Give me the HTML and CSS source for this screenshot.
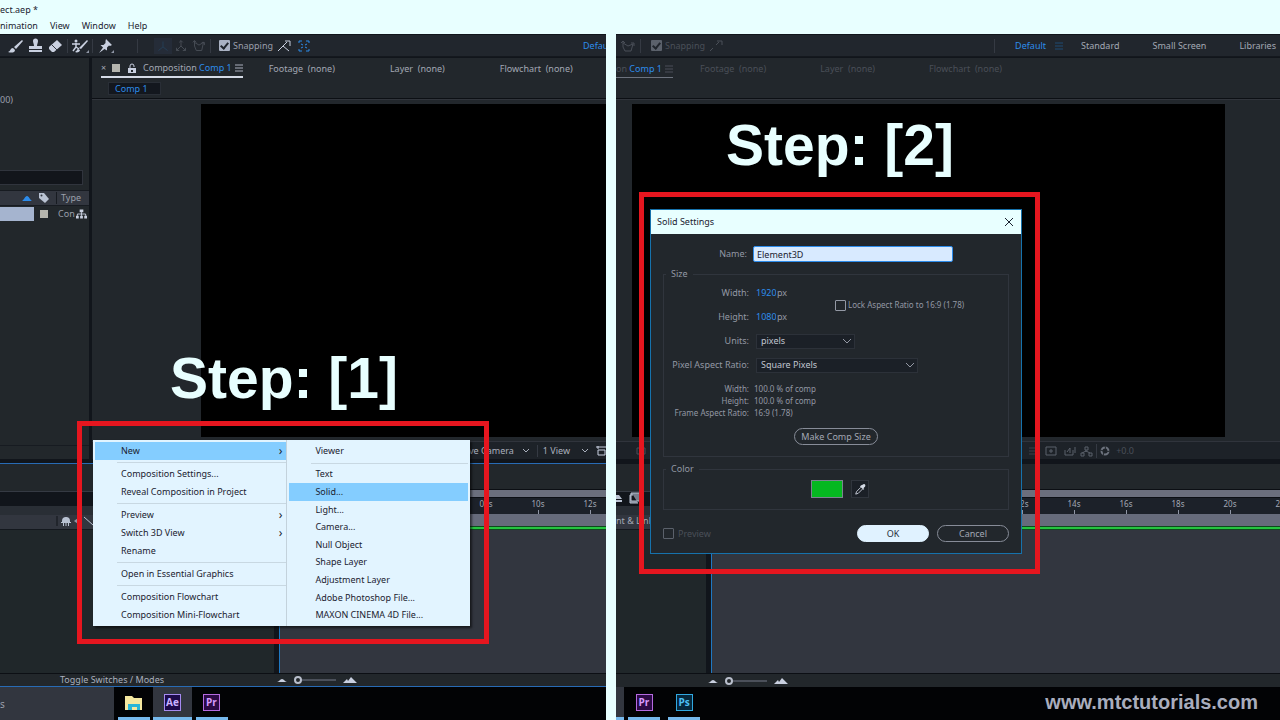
FILE: index.html
```html
<!DOCTYPE html>
<html lang="en">
<head>
<meta charset="utf-8">
<title>Adding a solid in two steps</title>
<link rel="stylesheet" href="styles.css">
</head>
<body>
<header class="titlebar">
  <div class="file-name">ect.aep *</div>
  <nav class="menubar">
    <button class="menu-name">nimation</button>
    <button class="menu-name">View</button>
    <button class="menu-name">Window</button>
    <button class="menu-name">Help</button>
  </nav>
</header>

<main class="split">
  <section class="pane">
    <div class="toolbar">
      <div class="tools">
        <svg class="tool" viewBox="0 0 20 16"><path d="M17 2 9 9l2 2 7-8zM8 10c-3 0-2 3-5 4 3 1 7 1 7-2z" fill="#c9d0e0"/></svg>
        <svg class="tool" viewBox="0 0 20 16"><path d="M8 3a2.500 2.500 0 0 1 5 0c0 2-1 3-1 5h5v3H4V8h5c0-2-1-3-1-5zM4 12h13v2H4z" fill="#c9d0e0"/></svg>
        <svg class="tool" viewBox="0 0 20 16"><path d="m4 9 8-7 5 5-8 7H7L4 11z" fill="#c9d0e0"/><path d="m7 7 5 5" stroke="#32363f"/></svg>
        <span class="rule"></span>
        <svg class="tool" viewBox="0 0 20 16"><path d="M17 2 9 10l2 1 7-8zM8 11c-1 0-1 2-3 3 2 1 5 0 5-2z" fill="#c9d0e0"/><circle cx="6" cy="3" r="1.500" fill="#c9d0e0"/><path d="M2 6h8M6 5v4l-3 4M6 9l3 2" stroke="#c9d0e0" stroke-width="1.500" fill="none"/><path d="M19 15v-3l-3 3z" fill="#8f96a5"/></svg>
        <span class="rule"></span>
        <svg class="tool" viewBox="0 0 20 16"><path d="m11 1 6 6-2 1-1-.500-2 2v3L9.500 11 4 15l4-5.500L5.500 7h3l2-2V3z" fill="#c9d0e0"/><path d="M19 15v-3l-3 3z" fill="#8f96a5"/></svg>
      </div>
      <div class="tools off">
        <span class="rule"></span>
        <svg class="tool boxed" viewBox="0 0 20 16"><path d="M10 3v6l-5 4M10 9l5 4" stroke="#253f58" fill="none"/></svg>
        <svg class="tool" viewBox="0 0 20 16"><path d="M10 2v6l-5 5M10 8l5 5M8 4l2-2 2 2M5 10v3h3M15 10v3h-3" stroke="#4a4f58" fill="none"/></svg>
        <svg class="tool" viewBox="0 0 20 16"><path d="M5 2v6l2 5h6l2-9-5 3-5-3M3 4l2-2 2 2M13 4h3v3" stroke="#4a4f58" fill="none"/></svg>
        <span class="rule"></span>
      </div>
      <label class="snap"><input type="checkbox" class="tick" checked>Snapping</label>
      <svg class="tool" viewBox="0 0 20 16"><path d="m4 13 5-5 6 5M9 8l4-4M11 3h5v5" stroke="#c9d0e0" fill="none"/></svg>
      <svg class="tool" viewBox="0 0 20 16"><path d="M5 5V3h3M12 3h3v2M15 11v2h-3M8 13H5v-2M7 6l2 1M13 6l-2 1M7 10l2-1M13 10l-2-1" stroke="#2d8ceb" fill="none"/></svg>
      <a class="space-name active push" href="#">Default</a>
    </div>

    <div class="upper">
      <div class="project">
        <div class="project-info">00)</div>
        <input class="search" type="text" aria-label="Search project">
        <div class="project-head">
          <svg class="sort" viewBox="0 0 10 5"><path d="M0 5c2-1 3-5 5-5s3 4 5 5z" fill="#2d8ceb"/></svg>
          <svg class="tag" viewBox="0 0 12 12"><path d="M1 1h5l5 6-4 4-6-5z" fill="#b9c2d2"/><circle cx="3.500" cy="3.500" r="1" fill="#32363f"/></svg>
          <span class="type">Type</span>
        </div>
        <div class="project-row">
          <span class="picked"></span><span class="chip"></span><span class="kind">Con</span>
          <svg class="tree" viewBox="0 0 12 12"><path d="M4 1h4v3H4zM0 8h3v3H0zM4.500 8h3v3h-3zM9 8h3v3H9z" fill="#c9d0e0"/><path d="M6 4v4M1.500 8V6h9v2" stroke="#c9d0e0" fill="none"/></svg>
        </div>
        <div class="project-foot"></div>
      </div>

      <div class="comp">
        <div class="tabs">
          <div class="tab current">
            <span class="cross">×</span><span class="chip"></span>
            <svg class="lock" viewBox="0 0 10 11"><path d="M1 5h8v5H1z" fill="#c9d0e0"/><path d="M3 5V3a2 2 0 0 1 4 0v1" stroke="#c9d0e0" fill="none"/><path d="M4 7h2v2H4z" fill="#22272c"/></svg>
            <span>Composition <a href="#">Comp 1</a></span>
            <svg class="lines" viewBox="0 0 8 8"><path d="M0 1h8M0 4h8M0 7h8" stroke="#aab0bd"/></svg>
          </div>
          <div class="tab">Footage&nbsp; (none)</div>
          <div class="tab">Layer&nbsp; (none)</div>
          <div class="tab">Flowchart&nbsp; (none)</div>
        </div>
        <div class="crumbs"><a class="crumb" href="#">Comp 1</a></div>
        <div class="stage"><div class="canvas"></div></div>
        <div class="viewbar">
          <button class="drop">Active Camera<svg viewBox="0 0 8 5"><path d="m1 1 3 3 3-3" stroke="#aab0bd" fill="none"/></svg></button>
          <button class="drop view">1 View<svg viewBox="0 0 8 5"><path d="m1 1 3 3 3-3" stroke="#aab0bd" fill="none"/></svg></button>
          <svg class="pixel" viewBox="0 0 10 10"><path d="M2 4h7v5H2zM0 1h10M2 0v3" stroke="#c9d0e0" fill="none"/></svg>
        </div>
      </div>
    </div>

    <div class="timeline focused">
      <div class="layers">
        <div class="layers-top"></div>
        <div class="layers-dark"></div>
        <div class="layers-head">
          <svg viewBox="0 0 40 12"><path d="M1 1v10" stroke="#11151b"/><path d="M6 6a4 4 0 0 1 8 0v1H6z" fill="#b9c2d2"/><path d="M5 7.500h10M7.500 8v3M12.500 8v3M10 2v9" stroke="#b9c2d2"/><path d="m18 6 4-3v6z" fill="#8f96a5"/><path d="m28 2 9 8" stroke="#b9c2d2"/></svg>
        </div>
        <div class="layers-body"></div>
      </div>
      <div class="track">
        <div class="track-top"></div>
        <div class="navigator"></div>
        <div class="ruler"><i></i><span></span><span></span><span></span><span>08s</span><span>10s</span><span>12s</span></div>
        <div class="workarea"></div>
        <div class="track-body"></div>
      </div>
    </div>
    <div class="zoombar">
      <button class="toggle">Toggle Switches / Modes</button>
      <div class="zoom">
        <svg viewBox="0 0 10 6"><path d="M0 5c2 0 3-3 5-3s3 3 5 3z" fill="#c9d0e0"/></svg>
        <input type="range" value="0" aria-label="Timeline zoom">
        <svg class="big" viewBox="0 0 14 8"><path d="M0 7 4 3l1 2 3-4 6 6z" fill="#c9d0e0"/></svg>
      </div>
    </div>
    <div class="taskbar">
      <div class="find">s</div>
      <button class="app open" aria-label="File Explorer"><svg viewBox="0 0 18 16"><path d="M0 1h7l2 2h8v12H0z" fill="#f4e8a0"/><path d="M3 9h12v6h-3v-3H7v3H3z" fill="#29b6d8"/></svg></button>
      <button class="app open lit"><span class="badge">Ae</span></button>
      <button class="app open"><span class="badge pr">Pr</span></button>
    </div>

    <h2 class="step one">Step: [1]</h2>
    <div class="frame first">
      <div class="menus">
        <div class="menu">
          <button class="item hot">New<span>›</span></button>
          <hr>
          <button class="item">Composition Settings...</button>
          <button class="item">Reveal Composition in Project</button>
          <hr>
          <button class="item">Preview<span>›</span></button>
          <button class="item">Switch 3D View<span>›</span></button>
          <button class="item">Rename</button>
          <hr>
          <button class="item">Open in Essential Graphics</button>
          <hr>
          <button class="item">Composition Flowchart</button>
          <button class="item">Composition Mini-Flowchart</button>
        </div>
        <div class="menu sub">
          <button class="item">Viewer</button>
          <hr>
          <button class="item">Text</button>
          <button class="item hot">Solid...</button>
          <button class="item">Light...</button>
          <button class="item">Camera...</button>
          <button class="item">Null Object</button>
          <button class="item">Shape Layer</button>
          <button class="item">Adjustment Layer</button>
          <button class="item">Adobe Photoshop File...</button>
          <button class="item">MAXON CINEMA 4D File...</button>
        </div>
      </div>
    </div>
  </section>

  <section class="pane right">
    <div class="toolbar">
      <svg class="tool" viewBox="0 0 20 16"><path d="M7 3v6l2 4h6l2-7-5 2-5-3M5 5l2-2 2 2M15 5h3v3" stroke="#4a4f58" fill="none"/></svg>
      <span class="rule"></span>
      <label class="snap"><input type="checkbox" class="tick" checked>Snapping</label>
      <svg class="tool" viewBox="0 0 20 16"><path d="m4 13 3-3M10 7l3-3M11 3h5v4" stroke="#4a4f58" fill="none"/></svg>
      <span class="rule push"></span>
      <nav class="spaces">
        <a class="space-name active" href="#">Default</a>
        <svg class="lines" viewBox="0 0 8 8"><path d="M0 1h8M0 4h8M0 7h8" stroke="#1f4a74"/></svg>
        <a class="space-name" href="#">Standard</a>
        <a class="space-name" href="#">Small Screen</a>
        <a class="space-name" href="#">Libraries</a>
      </nav>
    </div>

    <div class="upper">
      <div class="comp">
        <div class="tabs">
          <div class="tab current"><span>on <a href="#">Comp 1</a></span>
            <svg class="lines" viewBox="0 0 8 8"><path d="M0 1h8M0 4h8M0 7h8" stroke="#4a4f58"/></svg>
          </div>
          <div class="tab">Footage&nbsp; (none)</div>
          <div class="tab">Layer&nbsp; (none)</div>
          <div class="tab">Flowchart&nbsp; (none)</div>
        </div>
        <div class="crumbs"></div>
        <div class="stage"><div class="canvas"></div></div>
        <div class="viewbar">
          <svg class="pixel" viewBox="0 0 10 10"><path d="M1 2h8v6H1zM4 4h3v2H4z" stroke="#4a4f58" fill="none"/></svg>
          <svg class="view-icons" viewBox="0 0 64 12"><g stroke="#5b616b" fill="none"><path d="M0 3h6M0 6h6M0 9h6" opacity=".5"/><path d="M17 2h10v8H17zM20 6h4M22 4v4"/><path d="M36 5v5h8V5M38 7l3-4v5M46 2v6"/><path d="M56 2h3v3h-3zM52 8h3v3h-3zM60 8h3v3h-3zM57 5v2M53 8l4-2 4 2"/></g></svg>
          <span class="rule"></span>
          <svg class="pixel" viewBox="0 0 10 10"><circle cx="5" cy="5" r="3.500" stroke="#6d737e" stroke-width="2" fill="none"/><path d="m5 0 1 4M10 5 6 6M3 10l1-4M0 4l4 1" stroke="#22272c"/></svg>
          <span class="exposure">+0.0</span>
        </div>
      </div>
    </div>

    <div class="timeline">
      <div class="layers">
        <div class="layers-top"></div>
        <div class="layers-dark tools-row">
          <svg viewBox="0 0 26 12"><path d="M0 3h3l3 4H0zM0 8h6v2H0z" fill="#b9c2d2"/><path d="M15 1h9v8h-9zM17 3h-3v8h8" stroke="#b9c2d2" fill="#777e8c"/></svg>
        </div>
        <div class="layers-head">nt &amp; Link</div>
        <div class="layers-body"></div>
      </div>
      <div class="track">
        <div class="track-top"></div>
        <div class="navigator"></div>
        <div class="ruler"><i></i><span></span><span></span><span></span><span></span><span></span><span>12s</span><span>14s</span><span>16s</span><span>18s</span><span>20s</span><span>22s</span></div>
        <div class="workarea"></div>
        <div class="track-body"></div>
      </div>
    </div>
    <div class="zoombar">
      <div class="zoom">
        <svg viewBox="0 0 10 6"><path d="M0 5c2 0 3-3 5-3s3 3 5 3z" fill="#c9d0e0"/></svg>
        <input type="range" value="0" aria-label="Timeline zoom">
        <svg class="big" viewBox="0 0 14 8"><path d="M0 7 4 3l1 2 3-4 6 6z" fill="#c9d0e0"/></svg>
      </div>
    </div>
    <div class="taskbar">
      <div class="find"></div>
      <button class="app open"><span class="badge pr">Pr</span></button>
      <button class="app open"><span class="badge ps">Ps</span></button>
      <div class="site">www.mtctutorials.com</div>
    </div>

    <h2 class="step two">Step: [2]</h2>
    <div class="frame second">
      <form class="dialog">
        <div class="dialog-title">Solid Settings
          <button type="button" class="close" aria-label="Close"><svg viewBox="0 0 10 10"><path d="m1 1 8 8M9 1 1 9" stroke="#1b2230" fill="none"/></svg></button>
        </div>
        <div class="dialog-body">
          <div class="name-row"><label for="name">Name:</label><input id="name" type="text" value="Element3D"></div>
          <fieldset class="size">
            <legend>Size</legend>
            <div class="grid">
              <label for="w">Width:</label><div class="num"><input id="w" type="text" value="1920">px</div>
              <label class="ratio"><input type="checkbox" class="box">Lock Aspect Ratio to 16:9 (1.78)</label>
              <label for="h">Height:</label><div class="num"><input id="h" type="text" value="1080">px</div>
              <label for="u">Units:</label><select id="u" class="units"><option>pixels</option></select>
              <label for="p">Pixel Aspect Ratio:</label><select id="p" class="par"><option>Square Pixels</option></select>
            </div>
            <dl class="facts">
              <dt>Width:</dt><dd>100.0 % of comp</dd>
              <dt>Height:</dt><dd>100.0 % of comp</dd>
              <dt>Frame Aspect Ratio:</dt><dd>16:9 (1.78)</dd>
            </dl>
            <button type="button" class="pill fit">Make Comp Size</button>
          </fieldset>
          <fieldset class="color">
            <legend>Color</legend>
            <div class="color-row">
              <button type="button" class="swatch" aria-label="Solid color"></button>
              <button type="button" class="dropper" aria-label="Eyedropper"><svg viewBox="0 0 14 14"><path d="m8 5-5 5-1 3 3-1 5-5" stroke="#d5dbe6" fill="none"/><path d="m7 4 4 4 1-1-1-1 2-2c1-2-1-4-3-2L8 3z" fill="#d5dbe6"/></svg></button>
            </div>
          </fieldset>
          <div class="actions">
            <label class="preview"><input type="checkbox" class="box" disabled>Preview</label>
            <button type="button" class="pill ok">OK</button>
            <button type="button" class="pill">Cancel</button>
          </div>
        </div>
      </form>
    </div>
  </section>
</main>
</body>
</html>
```
FILE: styles.css
```css
* { box-sizing: border-box; }

body {
  margin: 0;
  min-height: 100vh;
  display: flex;
  flex-direction: column;
  background: #e8ffff;
  color: #9a9fab;
  font: 9px/12px "Noto Sans", "Open Sans", sans-serif;
}

button, input, select { font: inherit; color: inherit; margin: 0; padding: 0; border: 0; background: none; }
a { color: #2d8ceb; text-decoration: none; }
svg { flex: none; display: block; }

/* Title and menu bar */
.titlebar { height: 34px; padding-top: 4px; color: #1b2230; }
.menubar { display: flex; gap: 12px; padding-top: 4px; }
.menu-name { line-height: 12px; }

/* Two screenshots side by side */
.split { flex: 1; display: grid; grid-template-columns: 606fr 664fr; gap: 10px; }
.pane {
  position: relative;
  min-width: 0;
  overflow: hidden;
  display: flex;
  flex-direction: column;
  background: #11151b;
  border-top: 1px solid #11151b;
}

/* Tool bar */
.toolbar {
  height: 22px;
  display: flex;
  align-items: center;
  background: #21262d;
  border-bottom: 1px solid #14181e;
  white-space: nowrap;
}
.tools { display: flex; align-items: center; padding-left: 5px; }
.tools.off { padding-left: 20px; }
.tool { width: 20px; height: 16px; }
.tools .rule { margin: 0 2px; }
.tools.off .tool { width: 18px; }
.off .boxed { background: #252c38; margin-left: 14px; }
.rule { width: 1px; height: 14px; background: #353a43; }
.snap { display: flex; align-items: center; gap: 3px; margin: 0 1px 0 6px; }
.tick {
  appearance: none;
  width: 11px;
  height: 11px;
  border-radius: 1px;
  background: #aab2c3;
}
.tick::after {
  content: "";
  display: block;
  width: 3px;
  height: 6px;
  margin: 1px auto;
  border: solid #20252c;
  border-width: 0 2px 2px 0;
  transform: rotate(40deg);
}
.push { margin-left: auto; }
.space-name { color: #a3a8b4; }
.space-name.active { color: #2d8ceb; }
.toolbar > .space-name { width: 23px; overflow: hidden; }
.spaces { display: flex; align-items: center; padding: 0 4px 0 16px; }
.spaces .lines { margin: 0 18px 0 9px; }
.spaces .space-name + .space-name { margin-left: 33px; }
.lines { width: 8px; height: 8px; }

/* Project and composition panels */
.upper { height: 406px; display: flex; gap: 3px; padding: 1px 0 4px; }
.project { width: 89px; background: #22272b; display: flex; flex-direction: column; }
.project-info { height: 112px; padding-top: 36px; }
.search { width: 83px; height: 15px; background: #12151b; border: 1px solid #30343d; border-left: 0; }
.project-head {
  height: 16px;
  margin-top: 5px;
  padding-left: 22px;
  display: flex;
  align-items: center;
  gap: 6px;
  background: #32363f;
  border: solid #171b21;
  border-width: 1px 0;
}
.sort { width: 10px; height: 5px; }
.tag { width: 12px; height: 12px; }
.type { padding-left: 4px; border-left: 1px solid #171b21; }
.project-row { height: 15px; display: flex; align-items: center; }
.picked { width: 34px; height: 14px; margin-right: 6px; background: #a5b4cf; }
.chip { width: 8px; height: 8px; background: #b5b5ae; }
.kind { width: 17px; margin-left: 10px; overflow: hidden; }
.tree { width: 11px; height: 12px; margin-left: 1px; }
.project-foot { height: 14px; margin-top: auto; border-top: 1px solid #171b21; }

.comp { flex: 1; min-width: 0; display: flex; flex-direction: column; background: #22272c; }
.tabs { display: flex; padding-left: 9px; white-space: nowrap; }
.tab { height: 20px; padding: 5px 0 3px; margin-left: 26px; color: #a3a8b4; }
.tab + .tab + .tab { margin-left: 55px; }
.tab.current { display: flex; align-items: center; margin: 0; border-bottom: 2px solid #d5dbe6; }
.cross { width: 11px; }
.lock { width: 10px; height: 11px; margin: 0 6px 0 7px; }
.current .lines { margin-left: 3px; }
.crumbs { height: 21px; padding: 4px 16px; border-bottom: 1px solid #0c0f14; }
.crumb { display: block; width: 53px; height: 13px; padding-left: 6px; background: #13171e; border: 1px solid #292e36; line-height: 11px; }
.stage { flex: 1; padding: 4px 0 4px 109px; display: flex; border-top: 1px solid #31353c; }
.canvas { flex: 1; background: #000; }
.viewbar {
  height: 18px;
  display: flex;
  align-items: center;
  justify-content: flex-end;
  gap: 7px;
  border-top: 1px solid #30343c;
  background: #1d2228;
  white-space: nowrap;
}
.drop { display: flex; align-items: center; gap: 8px; color: #aab0bd; }
.drop svg { width: 8px; height: 5px; }
.drop.view { gap: 11px; padding-left: 5px; border-left: 1px solid #353a43; }
.pixel { width: 10px; height: 10px; }

/* Timeline */
.timeline { flex: 1; display: flex; gap: 5px; min-height: 200px; border-top: 1px solid #11151b; }
.timeline.focused { border-top: 1px solid #286bb5; }
.layers { width: 274px; display: flex; flex-direction: column; }
.layers-top { height: 28px; background: #22272b; border-bottom: 1px solid #353a43; }
.layers-dark { height: 23px; background: linear-gradient(#11151b 14px, #292e35 14px); }
.layers-head { height: 15px; background: #32363f; border-bottom: 1px solid #14181e; color: #a3a8b4; }
.layers-head svg { width: 40px; height: 12px; margin-left: 56px; }
.layers-body { flex: 1; background: #20272a; }
.track { flex: 1; min-width: 0; display: flex; flex-direction: column; overflow: hidden; }
.track-top { height: 26px; background: #22272b; border-bottom: 1px solid #0c0f14; }
.navigator { height: 7px; background: #6b6f7d; }
.ruler { height: 17px; display: flex; overflow: hidden; background: #1c2129; border-top: 1px solid #0c0f14; color: #a3a8b4; font-size: 8px; }
.ruler i { flex: none; width: 25px; }
.ruler span {
  flex: none;
  width: 52px;
  text-align: center;
  background: linear-gradient(#8f96a5, #8f96a5) bottom / 1px 4px no-repeat;
}
.workarea { height: 16px; background: linear-gradient(#666b7b 12px, #0d4a1c 12px, #0d4a1c 13px, #25c440 13px, #25c440 15px, #0d4a1c 15px); }
.track-body { flex: 1; background: #32363f; border-left: 1px solid #1f78c2; }

.zoombar {
  height: 14px;
  display: flex;
  align-items: center;
  justify-content: flex-end;
  background: #22272b;
  border-top: 1px solid #0c0f14;
}
.timeline.focused + .zoombar { border-bottom: 1px solid #286bb5; }
.toggle { width: 104px; margin-right: 113px; color: #aab0bd; white-space: nowrap; }
.zoom { display: flex; align-items: center; gap: 7px; }
.pane:not(.right) .zoom { margin-right: 249px; }
.zoom svg { width: 10px; height: 6px; }
.zoom .big { width: 14px; height: 8px; }
.zoom input { appearance: none; width: 42px; height: 9px; background: linear-gradient(#4b505a, #4b505a) center / 100% 2px no-repeat; }
.zoom input::-webkit-slider-thumb { appearance: none; width: 8px; height: 8px; border-radius: 50%; background: #22272b; border: 2px solid #b9bfcc; }

/* Task bar */
.taskbar { height: 33px; display: flex; background: #020305; }
.find { width: 114px; padding-top: 11px; background: #32363f; font-size: 10px; }
.app { width: 39px; display: flex; flex-direction: column; align-items: center; }
.app svg { width: 18px; height: 16px; margin: 8px 0 6px; }
.app.open::after { content: ""; width: 32px; height: 3px; margin-top: auto; background: #76b9ed; }
.app.lit { background: #32363f; }
.app.lit::after { width: 39px; }
.badge {
  width: 17px;
  height: 17px;
  margin-top: 7px;
  border: 1px solid #a58af0;
  background: #1d0a4a;
  color: #c9b2ff;
  font: bold 10px/15px "Open Sans", sans-serif;
}
.badge.pr { border-color: #b56ae0; background: #2c0a45; color: #d79bff; }
.badge.ps { border-color: #31a8e0; background: #06283c; color: #4cc0f5; }
.site { margin-left: auto; padding-right: 22px; color: #a9adbd; font: bold 20px/30px "Liberation Sans", Arial, sans-serif; }

/* Callouts */
.step { position: absolute; margin: 0; color: #e8ffff; font: bold 57px/64px "Liberation Sans", Arial, sans-serif; white-space: nowrap; }
.step.one { left: 170px; top: 311px; }
.step.two { left: 110px; top: 78px; }
.frame { position: absolute; border: 5px solid #e6161f; }
.frame.first { left: 77px; top: 386px; width: 412px; padding: 14px 14px 13px 11px; }
.frame.second { left: 23px; top: 157px; width: 401px; padding: 12px 13px 15px 6px; }

/* Context menus */
.menus { display: flex; background: #e2f4ff; color: #1b2230; box-shadow: 2px 2px 2px #0008; }
.menu { flex: 195; display: flex; flex-direction: column; padding: 2px 0 2px 2px; }
.menu.sub { flex: 182; padding: 2px 2px; border-left: 1px solid #c3d2dc; }
.item { height: 18px; padding: 0 4px 0 26px; display: flex; align-items: center; justify-content: space-between; text-align: left; }
.item span { font-size: 12px; }
.sub .item { flex: 1; height: auto; padding-left: 26px; }
.item.hot { background: #84cdff; }
.menu hr { width: auto; height: 1px; margin: 2px 0 2px 22px; border: 0; background: #c8d8e2; }
.menu.sub hr { margin: 3px 0 2px 22px; }

/* Solid Settings */
.dialog { border: 1px solid #1672ac; background: #22272c; color: #9398a4; }
.dialog-title { height: 24px; padding: 0 7px 0 6px; display: flex; align-items: center; justify-content: space-between; background: #e8ffff; color: #1b2230; }
.close svg { width: 10px; height: 10px; }
.dialog-body { padding: 12px 12px 11px; }
.name-row { display: flex; align-items: center; gap: 6px; }
.name-row label { width: 84px; text-align: right; }
.name-row input { width: 200px; height: 16px; padding: 0 3px; border: 1px solid #2d8ceb; border-radius: 2px; background: #d8eaff; color: #1b2230; }
fieldset { min-width: 0; margin: 6px 0 0; padding: 0 0 11px; border: 1px solid #30353d; }
legend { height: 12px; margin-left: 2px; padding: 0 5px; }
.grid { display: grid; grid-template-columns: 85px 72px 1fr; column-gap: 7px; grid-auto-rows: 24px; align-items: center; padding-top: 1px; }
.grid > label { text-align: right; white-space: nowrap; }
.num { display: flex; gap: 1px; }
.num input { width: 20px; color: #2d8ceb; }
.grid > .ratio { grid-column: 3; grid-row: 1 / 3; display: flex; align-items: center; gap: 2px; font-size: 8px; }
.box { appearance: none; width: 11px; height: 11px; border: 1px solid #9398a4; border-radius: 1px; }
.dialog select {
  grid-column: 2 / 4;
  height: 15px;
  padding: 0 4px;
  appearance: none;
  border: 1px solid #2c3139;
  color: #c0c5cf;
  background:
    linear-gradient(45deg, transparent 46%, #9398a4 46% 60%, transparent 60%) right 7px center / 4px 4px no-repeat,
    linear-gradient(-45deg, transparent 46%, #9398a4 46% 60%, transparent 60%) right 3px center / 4px 4px no-repeat,
    #1b2027;
}
.units { width: 99px; }
.par { width: 162px; }
.facts { display: grid; grid-template-columns: 85px 1fr; column-gap: 5px; margin: 6px 0 9px; font-size: 8px; }
.facts dt { text-align: right; white-space: nowrap; }
.facts dd { margin: 0; }
.pill { width: 72px; height: 17px; border: 1px solid #878c98; border-radius: 9px; color: #a3a8b4; line-height: 14px; }
.pill.fit { display: block; width: 84px; margin: 0 auto; }
.pill.ok { margin-left: auto; background: #e0f2ff; border-color: #e0f2ff; color: #27303c; }
.color-row { display: flex; gap: 8px; padding: 5px 0 0 147px; }
.swatch { width: 32px; height: 18px; background: #05b820; border: 1px solid #7c8490; }
.dropper { width: 18px; height: 18px; padding: 2px; border: 1px solid #30353d; background: #1b2027; }
.dropper svg { width: 12px; height: 12px; }
.actions { display: flex; align-items: center; gap: 8px; margin-top: 15px; }
.preview { display: flex; align-items: center; gap: 4px; color: #4a4f58; }
.preview .box { border-color: #5b616b; }

/* The second screenshot is dimmed behind its dialog */
.right .snap, .right .tab, .right .viewbar { color: #4a4f58; }
.right .tick { background: #5b616b; }
.right .toolbar .rule { margin: 0 4px; }
.right .toolbar .push { margin-left: auto; }
.right .tabs { padding-left: 0; }
.right .tab + .tab { margin-left: 27px; }
.right .tab + .tab + .tab { margin-left: 54px; }
.right .current { border-bottom: 1px solid #6d737e; }
.right .stage { padding-left: 16px; padding-right: 55px; }
.right .viewbar { justify-content: flex-start; gap: 3px; }
.right .viewbar > .pixel:first-child { margin-left: 20px; }
.view-icons { width: 64px; height: 12px; margin-left: auto; }
.exposure { margin: 0 146px 0 3px; }
.right .layers { width: 90px; }
.tools-row svg { width: 26px; height: 12px; }
.right .zoombar { justify-content: flex-start; padding-left: 92px; }
.right .find { width: 8px; border-bottom: 3px solid #76b9ed; }
.right .app { width: 40px; }
```
